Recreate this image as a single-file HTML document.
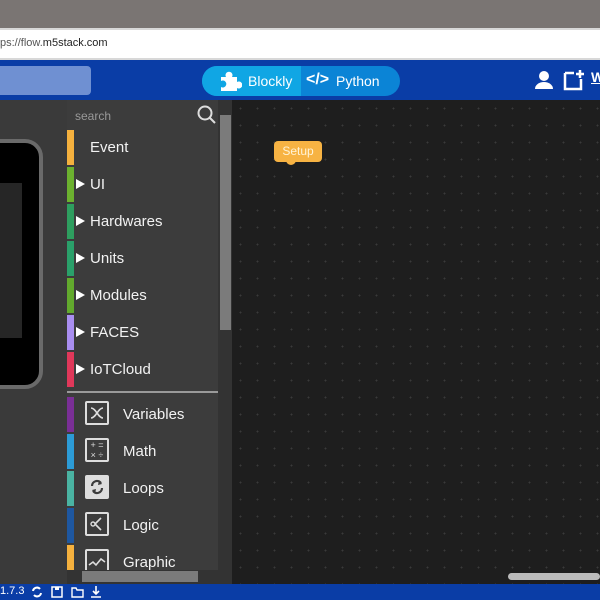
<!DOCTYPE html>
<html><head><style>
*{margin:0;padding:0;box-sizing:border-box}
body{width:600px;height:600px;overflow:hidden;position:relative;background:#1e1e1e;font-family:"Liberation Sans",sans-serif}
.a{position:absolute}
.row{position:absolute;left:67px;width:151px;height:35px;color:#f2f2f2;font-size:15px}
.row .s{position:absolute;left:0;top:0;width:7px;height:100%}
.row .t{position:absolute;left:23px;top:9px}
.row .tri{position:absolute;left:9px;top:12px;width:0;height:0;border-left:9px solid #fff;border-top:5px solid transparent;border-bottom:5px solid transparent}
.ico{position:absolute;left:18px;top:4px;width:24px;height:24px;border:2px solid #ddd;border-radius:2px}
.ico svg{position:absolute;left:0;top:0}
.row2 .t{left:56px}
</style></head><body>
<div class="a" style="left:0;top:0;width:600px;height:28px;background:#7a7573"></div>
<div class="a" style="left:0;top:28px;width:600px;height:32px;background:#fff;border-top:2px solid #d8d8d8;border-bottom:2px solid #d8d8d8"></div>
<div class="a" style="left:0;top:37px;font-size:11px;color:#555">ps://flow.<span style="color:#222">m5stack.com</span></div>
<div class="a" style="left:0;top:60px;width:600px;height:40px;background:#0a3da6"></div>
<div class="a" style="left:0;top:66px;width:91px;height:29px;background:#6f90d2;border-radius:0 4px 4px 0"></div>
<div class="a" style="left:202px;top:66px;width:198px;height:30px;background:#0b84d6;border-radius:15px;overflow:hidden">
 <div class="a" style="left:0;top:0;width:99px;height:30px;background:#10a6e4"></div>
 <svg class="a" style="left:16px;top:4px" width="24" height="22" viewBox="0 0 24 22"><path d="M3 7h5a3.5 3.5 0 1 1 6 0h5v5a3.5 3.5 0 1 1 0 6v3H3v-4a3.5 3.5 0 1 0 0-6z" fill="#fff"/></svg>
 <div class="a" style="left:46px;top:7px;color:#fff;font-size:14px">Blockly</div>
 <div class="a" style="left:104px;top:5px;color:#fff;font-size:16px;font-weight:bold">&lt;/&gt;</div>
 <div class="a" style="left:134px;top:7px;color:#fff;font-size:14px">Python</div>
</div>
<svg class="a" style="left:534px;top:70px" width="20" height="20"><circle cx="10" cy="6" r="5" fill="#fff"/><path d="M1 19a9 7 0 0 1 18 0z" fill="#fff"/></svg>
<svg class="a" style="left:563px;top:69px" width="22" height="22"><path d="M2 4v16h16V10M2 4h9" stroke="#fff" stroke-width="2.5" fill="none"/><path d="M17 1v8M13 5h8" stroke="#fff" stroke-width="2.5"/></svg>
<div class="a" style="left:591px;top:69px;color:#fff;font-size:14px;font-weight:bold;text-decoration:underline">W</div>
<div class="a" style="left:0;top:100px;width:67px;height:484px;background:#3a3a3a"></div>
<div class="a" style="left:-20px;top:139px;width:63px;height:250px;background:#000;border:4px solid #6a6a6a;border-radius:18px"></div>
<div class="a" style="left:0;top:183px;width:22px;height:155px;background:#262626"></div>
<div class="a" style="left:67px;top:100px;width:151px;height:484px;background:#3c3c3c"></div>
<div class="a" style="left:75px;top:109px;color:#999;font-size:12px">search</div>
<svg class="a" style="left:197px;top:105px" width="20" height="20"><circle cx="8" cy="8" r="6.5" stroke="#ddd" stroke-width="2" fill="none"/><path d="M13 13l5 5" stroke="#ddd" stroke-width="2"/></svg>
<div class="a" style="left:218px;top:100px;width:14px;height:484px;background:#333"></div>
<div class="a" style="left:220px;top:115px;width:11px;height:215px;background:#7b7b7b"></div>
<div class="row" style="top:130px"><div class="s" style="background:#f5b13e"></div><div class="t">Event</div></div>
<div class="row" style="top:167px"><div class="s" style="background:#6cb12f"></div><div class="tri"></div><div class="t">UI</div></div>
<div class="row" style="top:204px"><div class="s" style="background:#2e9e5f"></div><div class="tri"></div><div class="t">Hardwares</div></div>
<div class="row" style="top:241px"><div class="s" style="background:#2aa06a"></div><div class="tri"></div><div class="t">Units</div></div>
<div class="row" style="top:278px"><div class="s" style="background:#62a92d"></div><div class="tri"></div><div class="t">Modules</div></div>
<div class="row" style="top:315px"><div class="s" style="background:#a98ef0"></div><div class="tri"></div><div class="t">FACES</div></div>
<div class="row" style="top:352px"><div class="s" style="background:#e0385a"></div><div class="tri"></div><div class="t">IoTCloud</div></div>
<div class="a" style="left:67px;top:391px;width:151px;height:2px;background:#9a9a9a"></div>
<div class="row row2" style="top:397px"><div class="s" style="background:#7a2f96"></div><div class="ico"><svg width="20" height="20"><path d="M4 5c5 0 7 10 12 10M4 15c5 0 7-10 12-10" stroke="#ddd" stroke-width="1.6" fill="none"/></svg></div><div class="t">Variables</div></div>
<div class="row row2" style="top:434px"><div class="s" style="background:#2c9bd6"></div><div class="ico" style="font-size:9px;line-height:10px;text-align:center;color:#ddd">+ =<br>× ÷</div><div class="t">Math</div></div>
<div class="row row2" style="top:471px"><div class="s" style="background:#4ab3a2"></div><div class="ico" style="background:#ddd"><svg width="20" height="20"><path d="M5 9a5 5 0 0 1 9-3M15 11a5 5 0 0 1-9 3" stroke="#3c3c3c" stroke-width="2.2" fill="none"/><path d="M12 3l3 4-4 1zM8 17l-3-4 4-1z" fill="#3c3c3c"/></svg></div><div class="t">Loops</div></div>
<div class="row row2" style="top:508px"><div class="s" style="background:#1e57a0"></div><div class="ico"><svg width="20" height="20"><circle cx="6" cy="10" r="2" stroke="#ddd" stroke-width="1.4" fill="none"/><path d="M8 10l6-6M8 10l6 6" stroke="#ddd" stroke-width="1.6"/></svg></div><div class="t">Logic</div></div>
<div class="row row2" style="top:545px;height:25px;overflow:hidden"><div class="s" style="background:#f5b13e"></div><div class="ico"><svg width="20" height="20"><path d="M2 14l4-3 3 3 5-6 4 3" stroke="#ddd" stroke-width="1.6" fill="none"/></svg></div><div class="t">Graphic</div></div>
<div class="a" style="left:67px;top:570px;width:151px;height:14px;background:#333"></div>
<div class="a" style="left:82px;top:571px;width:116px;height:11px;background:#7b7b7b"></div>
<div class="a" style="left:232px;top:100px;width:368px;height:484px;background-color:#1e1e1e;background-image:radial-gradient(#3a3a3a 0.8px,transparent 1px);background-size:17px 17px"></div>
<div class="a" style="left:274px;top:141px;width:48px;height:21px;background:#f7b343;border-radius:4px;color:#fff3d6;font-size:12px;text-align:center;line-height:21px">Setup</div>
<div class="a" style="left:286px;top:160px;width:10px;height:5px;background:#f7b343;border-radius:0 0 5px 5px"></div>
<div class="a" style="left:508px;top:573px;width:92px;height:7px;background:#bbb;border-radius:4px"></div>
<div class="a" style="left:0;top:584px;width:600px;height:16px;background:#0a3da6"></div>
<div class="a" style="left:0;top:585px;color:#fff;font-size:11px">1.7.3</div>
<svg class="a" style="left:30px;top:585px" width="80" height="14"><path d="M3 6a4 4 0 0 1 7-2M11 8a4 4 0 0 1-7 2" stroke="#fff" stroke-width="2" fill="none"/><rect x="22" y="2" width="10" height="10" stroke="#fff" stroke-width="1.5" fill="none"/><rect x="25" y="2" width="4" height="3" fill="#fff"/><path d="M42 3h4l1 2h6v7H42z" stroke="#fff" stroke-width="1.4" fill="none"/><path d="M66 1v8M63 6l3 3 3-3M61 12h10" stroke="#fff" stroke-width="1.6" fill="none"/></svg>
</body></html>
